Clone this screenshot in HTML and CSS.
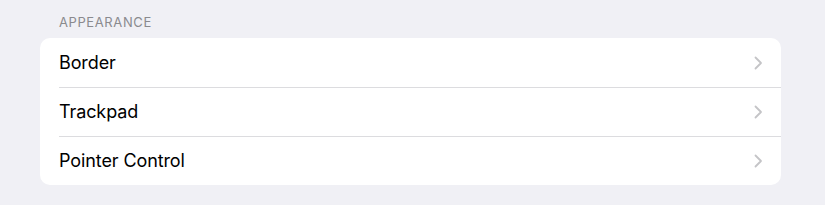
FILE: index.html
```html
<!DOCTYPE html>
<html>
<head>
<meta charset="utf-8">
<link rel="stylesheet" href="styles.css">
</head>
<body>
<div class="section">
  <div class="header">APPEARANCE</div>
  <div class="card">
    <div class="row"><span class="label">Border</span><svg class="chev" viewBox="0 0 9 14"><path d="M1.5 1.5 L7 7 L1.5 12.5"/></svg></div>
    <div class="row"><span class="label">Trackpad</span><svg class="chev" viewBox="0 0 9 14"><path d="M1.5 1.5 L7 7 L1.5 12.5"/></svg></div>
    <div class="row"><span class="label">Pointer Control</span><svg class="chev" viewBox="0 0 9 14"><path d="M1.5 1.5 L7 7 L1.5 12.5"/></svg></div>
  </div>
</div>
</body>
</html>
```
FILE: styles.css
```css
html, body {
  margin: 0;
  padding: 0;
  background: #f0f0f5;
  font-family: "Inter", "Roboto", sans-serif;
}
.section {
  padding: 13px 44px 0 40px;
}
.header {
  padding-left: 19px;
  font-size: 13px;
  color: #8a8a8e;
  letter-spacing: 0.6px;
  line-height: 18px;
  margin-bottom: 7px;
}
.card {
  background: #ffffff;
  border-radius: 10px;
  overflow: hidden;
}
.row {
  display: flex;
  align-items: center;
  height: 49px;
  padding-left: 19px;
  position: relative;
}
.row + .row::before {
  content: "";
  position: absolute;
  left: 19px;
  right: 0;
  top: 0;
  height: 1px;
  background: #dcdcdf;
}
.label {
  flex: 1;
  font-size: 18px;
  color: #000;
  letter-spacing: -0.1px;
}
.chev {
  width: 9px;
  height: 14px;
  margin-right: 18px;
  fill: none;
  stroke: #c4c4c7;
  stroke-width: 1.8;
  stroke-linecap: round;
  stroke-linejoin: round;
}
```
